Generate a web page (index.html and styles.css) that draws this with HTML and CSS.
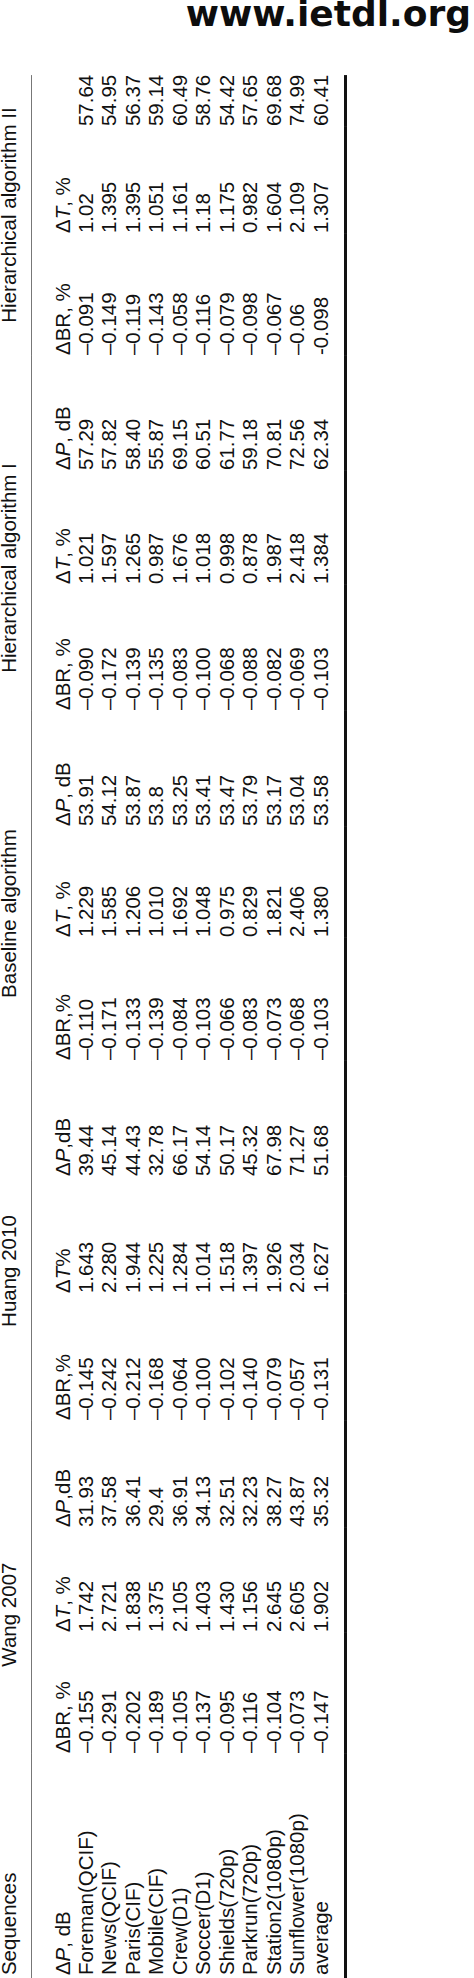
FILE: index.html
```html
<!DOCTYPE html>
<html lang="en">
<head>
<meta charset="utf-8">
<title>Comparison table</title>
<link rel="stylesheet" href="styles.css">
</head>
<body>
<div class="page">
  <div class="brand">www.ietdl.org</div>
  <div class="frame">
    <table class="results">
      <colgroup>
        <col class="c0"><col class="c1"><col class="c2"><col class="c3"><col class="c4"><col class="c5"><col class="c6"><col class="c7"><col class="c8"><col class="c9"><col class="c10"><col class="c11"><col class="c12"><col class="c13"><col class="c14"><col class="c15">
      </colgroup>
      <thead>
        <tr class="groups">
          <th class="first">Sequences</th>
          <th colspan="3" class="g g-wang">Wang 2007</th>
          <th colspan="3" class="g g-huang">Huang 2010</th>
          <th colspan="3" class="g g-base">Baseline algorithm</th>
          <th colspan="3" class="g g-h1">Hierarchical algorithm I</th>
          <th colspan="3" class="g g-h2">Hierarchical algorithm II</th>
        </tr>
        <tr class="units">
          <th class="first">Δ<i>P</i>, dB</th>
          <th>ΔBR, %</th><th>Δ<i>T</i>, %</th><th>Δ<i>P</i>,dB</th>
          <th>ΔBR,%</th><th>Δ<i>T</i>%</th><th>Δ<i>P</i>,dB</th>
          <th>ΔBR,%</th><th>Δ<i>T</i>, %</th><th>Δ<i>P</i>, dB</th>
          <th>ΔBR, %</th><th>Δ<i>T</i>, %</th><th>Δ<i>P</i>, dB</th>
          <th>ΔBR, %</th><th>Δ<i>T</i>, %</th><th></th>
        </tr>
      </thead>
      <tbody>
        <tr><td class="first">Foreman(QCIF)</td><td>–0.155</td><td>1.742</td><td>31.93</td><td>–0.145</td><td>1.643</td><td>39.44</td><td>–0.110</td><td>1.229</td><td>53.91</td><td>–0.090</td><td>1.021</td><td>57.29</td><td>–0.091</td><td>1.02</td><td>57.64</td></tr>
        <tr><td class="first">News(QCIF)</td><td>–0.291</td><td>2.721</td><td>37.58</td><td>–0.242</td><td>2.280</td><td>45.14</td><td>–0.171</td><td>1.585</td><td>54.12</td><td>–0.172</td><td>1.597</td><td>57.82</td><td>–0.149</td><td>1.395</td><td>54.95</td></tr>
        <tr><td class="first">Paris(CIF)</td><td>–0.202</td><td>1.838</td><td>36.41</td><td>–0.212</td><td>1.944</td><td>44.43</td><td>–0.133</td><td>1.206</td><td>53.87</td><td>–0.139</td><td>1.265</td><td>58.40</td><td>–0.119</td><td>1.395</td><td>56.37</td></tr>
        <tr><td class="first">Mobile(CIF)</td><td>–0.189</td><td>1.375</td><td>29.4</td><td>–0.168</td><td>1.225</td><td>32.78</td><td>–0.139</td><td>1.010</td><td>53.8</td><td>–0.135</td><td>0.987</td><td>55.87</td><td>–0.143</td><td>1.051</td><td>59.14</td></tr>
        <tr><td class="first">Crew(D1)</td><td>–0.105</td><td>2.105</td><td>36.91</td><td>–0.064</td><td>1.284</td><td>66.17</td><td>–0.084</td><td>1.692</td><td>53.25</td><td>–0.083</td><td>1.676</td><td>69.15</td><td>–0.058</td><td>1.161</td><td>60.49</td></tr>
        <tr><td class="first">Soccer(D1)</td><td>–0.137</td><td>1.403</td><td>34.13</td><td>–0.100</td><td>1.014</td><td>54.14</td><td>–0.103</td><td>1.048</td><td>53.41</td><td>–0.100</td><td>1.018</td><td>60.51</td><td>–0.116</td><td>1.18</td><td>58.76</td></tr>
        <tr><td class="first">Shields(720p)</td><td>–0.095</td><td>1.430</td><td>32.51</td><td>–0.102</td><td>1.518</td><td>50.17</td><td>–0.066</td><td>0.975</td><td>53.47</td><td>–0.068</td><td>0.998</td><td>61.77</td><td>–0.079</td><td>1.175</td><td>54.42</td></tr>
        <tr><td class="first">Parkrun(720p)</td><td>–0.116</td><td>1.156</td><td>32.23</td><td>–0.140</td><td>1.397</td><td>45.32</td><td>–0.083</td><td>0.829</td><td>53.79</td><td>–0.088</td><td>0.878</td><td>59.18</td><td>–0.098</td><td>0.982</td><td>57.65</td></tr>
        <tr><td class="first">Station2(1080p)</td><td>–0.104</td><td>2.645</td><td>38.27</td><td>–0.079</td><td>1.926</td><td>67.98</td><td>–0.073</td><td>1.821</td><td>53.17</td><td>–0.082</td><td>1.987</td><td>70.81</td><td>–0.067</td><td>1.604</td><td>69.68</td></tr>
        <tr><td class="first">Sunflower(1080p)</td><td>–0.073</td><td>2.605</td><td>43.87</td><td>–0.057</td><td>2.034</td><td>71.27</td><td>–0.068</td><td>2.406</td><td>53.04</td><td>–0.069</td><td>2.418</td><td>72.56</td><td>–0.06</td><td>2.109</td><td>74.99</td></tr>
        <tr class="last"><td class="first">average</td><td>–0.147</td><td>1.902</td><td>35.32</td><td>–0.131</td><td>1.627</td><td>51.68</td><td>–0.103</td><td>1.380</td><td>53.58</td><td>–0.103</td><td>1.384</td><td>62.34</td><td>-0.098</td><td>1.307</td><td>60.41</td></tr>
      </tbody>
    </table>
  </div>
</div>
</body>
</html>
```

FILE: styles.css
```css
html, body {
  margin: 0;
  padding: 0;
  background: #ffffff;
}

.page {
  width: 474px;
  height: 1978px;
  overflow: hidden;
  color: #111111;
}

.brand {
  box-sizing: border-box;
  height: 75px;
  padding-right: 3px;
  text-align: right;
  font-family: "DejaVu Sans", sans-serif;
  font-weight: bold;
  font-size: 36px;
  line-height: 27px;
  color: #0d0d0d;
}

.frame {
  width: 474px;
  height: 1903px;
  overflow: hidden;
}

.results {
  width: 1903px;
  table-layout: fixed;
  border-collapse: separate;
  border-spacing: 0;
  font-family: "Liberation Sans", Arial, sans-serif;
  font-size: 20.5px;
  transform-origin: top left;
  transform: rotate(-90deg) translateX(-100%);
}

.results th,
.results td {
  padding: 0;
  text-align: left;
  font-weight: normal;
  white-space: nowrap;
  vertical-align: top;
}

.results i {
  font-style: italic;
}

.results .first {
  padding-left: 3px;
}

.c0 { width: 225px; }
.c1 { width: 121px; }
.c2 { width: 105px; }
.c3 { width: 107px; }
.c4 { width: 127px; }
.c5 { width: 117px; }
.c6 { width: 116px; }
.c7 { width: 123px; }
.c8 { width: 111px; }
.c9 { width: 116px; }
.c10 { width: 126px; }
.c11 { width: 114px; }
.c12 { width: 115px; }
.c13 { width: 122px; }
.c14 { width: 107px; }
.c15 { width: 51px; }

.groups th {
  line-height: 16px;
  padding-top: 1px;
  padding-bottom: 13.5px;
  border-bottom: 1px solid #777777;
}

.groups .g {
  text-align: center;
}

.groups .g-wang { padding-right: 56px; }
.groups .g-huang { padding-right: 62px; }
.groups .g-base { padding-right: 57px; }
.groups .g-h1 { padding-right: 71px; }
.groups .g-h2 { padding-right: 0; }

.units th {
  line-height: 23px;
  padding-top: 19px;
}

.results tbody td {
  line-height: 23.5px;
}

.results tbody .last td {
  padding-bottom: 12px;
  border-bottom: 3px solid #111111;
}
```
